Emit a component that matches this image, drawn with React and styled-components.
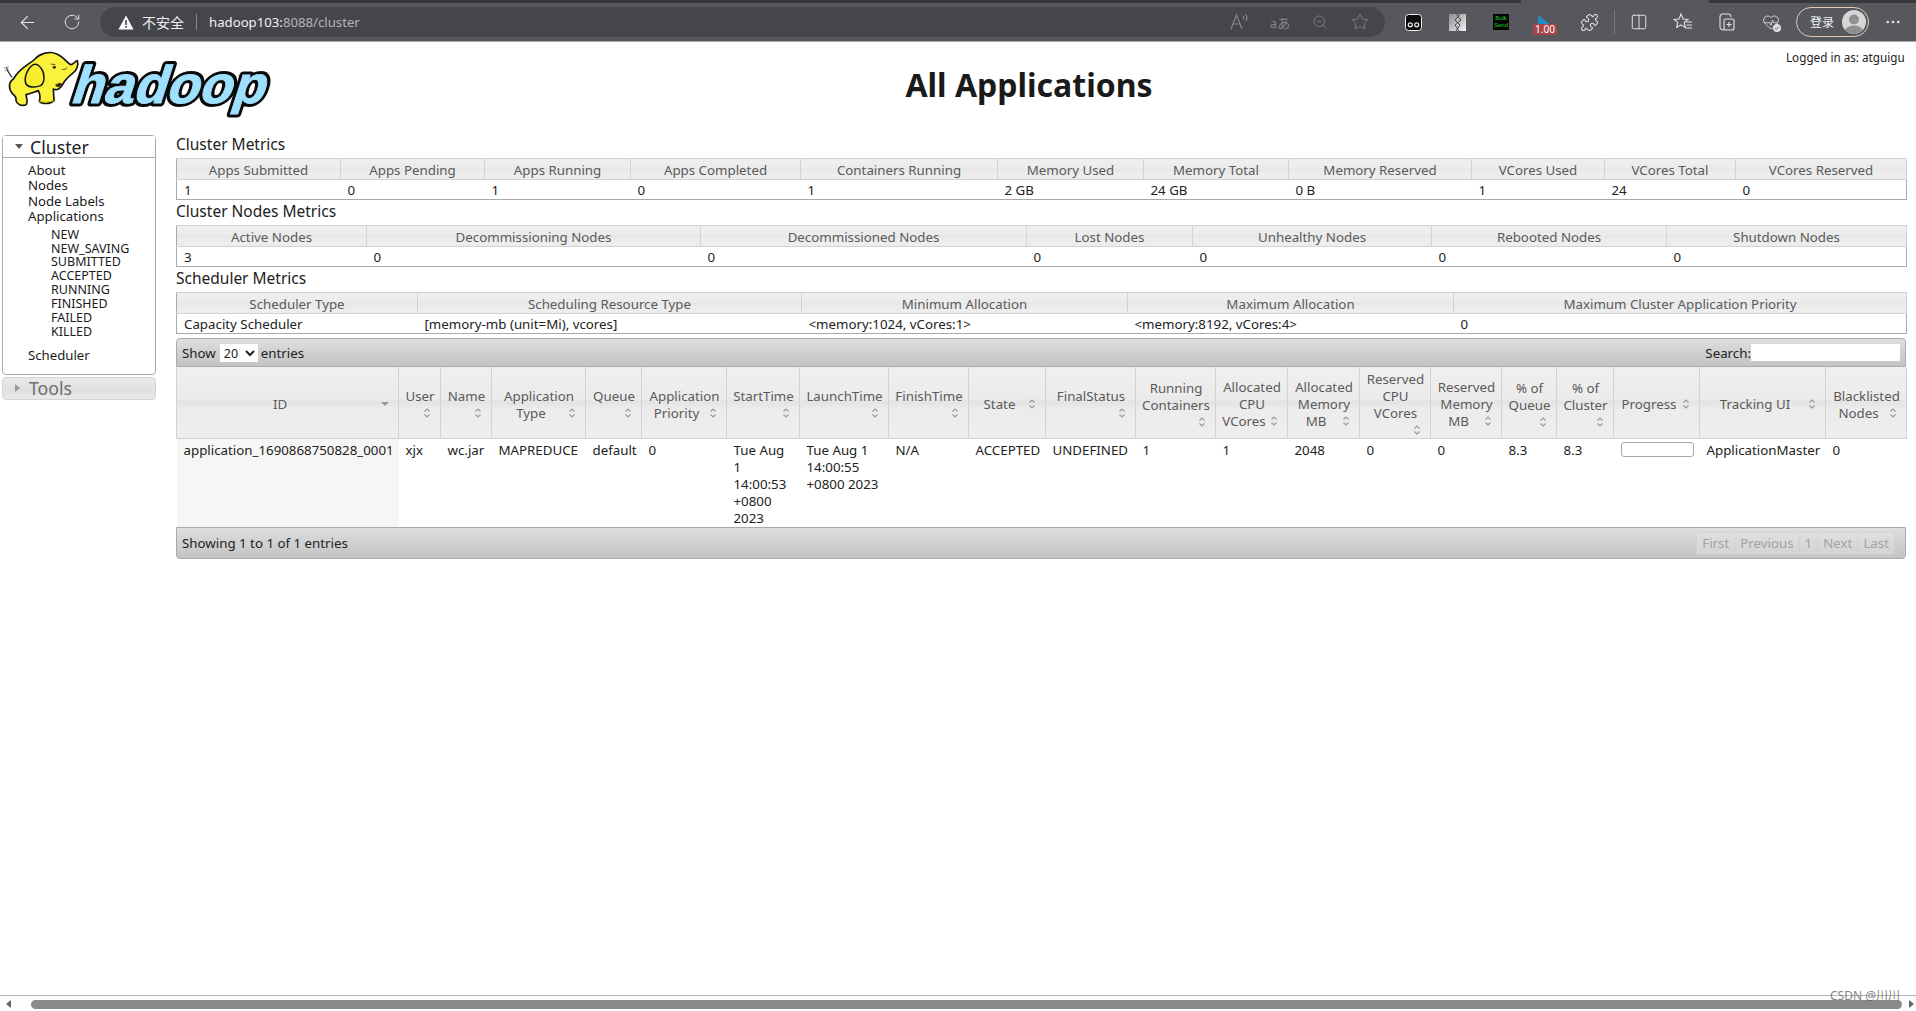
import React from "react";
import styled, { createGlobalStyle } from "styled-components";
import { ArrowLeft, RotateCw, ZoomOut, Star, Puzzle, Columns2, HeartPulse, MoreHorizontal } from "lucide-react";

const FONT = `"Noto Sans", "Noto Sans CJK SC", sans-serif`;

const GlobalStyle = createGlobalStyle`
  html, body {
    margin: 0;
    padding: 0;
    background: #fff;
    overflow: hidden;
  }
  body {
    font-family: ${FONT};
    font-size: 13.3px;
    color: #222;
  }
`;

const Page = styled.div`
  display: flex;
  flex-direction: column;
  width: 1916px;
  height: 1011px;
  overflow: hidden;
`;

/* browser chrome */
const TabStrip = styled.div`
  display: flex;
  height: 3px;
  background: #36373a;
`;

const TabNotch = styled.div`
  width: 188px;
  margin-left: 1521px;
  background: #57585d;
`;

const BrowserBar = styled.div`
  display: flex;
  align-items: center;
  height: 38px;
  padding-left: 5px;
  background: #57585d;
  border-bottom: 1px solid #a9a9a9;
  box-sizing: content-box;
  color: #e6e6e6;
`;

const NavButton = styled.div`
  display: flex;
  align-items: center;
  justify-content: center;
  flex: none;
  width: ${(p) => p.$w || 44}px;
  height: 30px;
  color: ${(p) => p.$color || "#e4e4e4"};
  position: relative;
`;

const AddressPill = styled.div`
  display: flex;
  align-items: center;
  flex: none;
  width: 1285px;
  height: 30px;
  margin: 0 6px;
  padding: 0 5px 0 18px;
  box-sizing: border-box;
  background: #45464b;
  border-radius: 15px;
`;

const Insecure = styled.span`
  margin-left: 8px;
  font-size: 14px;
  color: #f0f0f0;
`;

const PillDivider = styled.span`
  width: 1px;
  height: 16px;
  margin: 0 12px;
  background: #8a8a8a;
`;

const Url = styled.span`
  font-size: 13.2px;
  color: #b4b4b4;
  b {
    font-weight: 400;
    color: #f2f2f2;
  }
`;

const PillTools = styled.div`
  display: flex;
  margin-left: auto;
`;

const PillTool = styled.div`
  display: flex;
  align-items: center;
  justify-content: center;
  width: 40px;
  color: #85868a;
  font-size: 13px;
`;

const BarDivider = styled.span`
  flex: none;
  width: 1px;
  height: 24px;
  margin: 0 2px 0 3px;
  background: #77787c;
`;

const ProfilePill = styled.div`
  display: flex;
  align-items: center;
  justify-content: space-between;
  flex: none;
  width: 73px;
  height: 30px;
  margin-left: 3px;
  padding: 0 2px 0 13px;
  box-sizing: border-box;
  border: 1px solid #e2c9b8;
  border-radius: 15px;
  font-size: 12px;
  color: #f2f2f2;
`;

const BulkSend = styled.div`
  width: 16px;
  height: 16px;
  padding-top: 1px;
  box-sizing: border-box;
  background: #050505;
  color: #1fd01f;
  font-size: 6px;
  line-height: 7px;
  text-align: center;
  font-family: "Liberation Sans", sans-serif;
`;

const RateBadge = styled.div`
  position: absolute;
  left: 10px;
  top: 17px;
  width: 24px;
  height: 11px;
  border-radius: 2px;
  background: #a8434a;
  color: #fff;
  font-size: 10px;
  line-height: 11px;
  text-align: center;
`;

/* page header */
const Header = styled.div`
  display: flex;
  height: 90px;
`;

const LogoBox = styled.div`
  flex: none;
  width: 290px;
  height: 75px;
  margin-top: 4px;
`;

const Title = styled.h1`
  flex: 1;
  margin: 25px 0 0;
  padding-right: 18px;
  font-size: 32px;
  line-height: 36px;
  font-weight: 700;
  text-align: center;
  color: #1a1a1a;
`;

const LoggedIn = styled.div`
  flex: none;
  width: 130px;
  padding-top: 8px;
  font-size: 11.7px;
  line-height: 15px;
  color: #222;
`;

/* body */
const Content = styled.div`
  display: flex;
  flex: 1;
  padding: 0 10px 0 2px;
`;

const Sidebar = styled.nav`
  flex: none;
  width: 154px;
  margin: 3px 20px 0 0;
`;

const Panel = styled.div`
  border: 1px solid #aaa;
  border-radius: 4px;
  background: #fff;
`;

const PanelHead = styled.div`
  display: flex;
  align-items: center;
  height: ${(p) => (p.$closed ? 23 : 22)}px;
  margin-top: ${(p) => (p.$closed ? 2 : 0)}px;
  padding: ${(p) => (p.$closed ? "0 0 2px 12px" : "0 0 0 12px")};
  box-sizing: border-box;
  font-size: 17.7px;
  color: ${(p) => (p.$closed ? "#6e6e6e" : "#222")};
  background: ${(p) => (p.$closed ? "linear-gradient(#eaeaea, #e0e0e0 55%, #e9e9e9)" : "#fff")};
  border: ${(p) => (p.$closed ? "1px solid #d3d3d3" : "0")};
  border-bottom: ${(p) => (p.$closed ? "1px solid #d3d3d3" : "1px solid #aaa")};
  border-radius: ${(p) => (p.$closed ? "4px" : "0")};
`;

const Caret = styled.span`
  flex: none;
  width: 0;
  height: 0;
  margin-right: ${(p) => (p.$closed ? 9 : 7)}px;
  border-style: solid;
  ${(p) =>
    p.$closed
      ? "border-width: 4px 0 4px 5px; border-color: transparent transparent transparent #999;"
      : "border-width: 5px 4px 0 4px; border-color: #555 transparent transparent transparent;"}
`;

const NavList = styled.ul`
  list-style: none;
  margin: 0;
  padding: 4px 0 11px 25px;
`;

const NavItem = styled.li`
  font-size: 13.2px;
  line-height: 15.4px;
  color: #1b1b1b;
  &:first-child {
    margin-top: 1px;
  }
  &:last-child {
    margin-top: 9px;
  }
`;

const SubList = styled.ul`
  list-style: none;
  margin: 3px 0 0;
  padding: 0 0 0 23px;
`;

const SubItem = styled.li`
  font-size: 12.5px;
  line-height: 13.9px;
  color: #1b1b1b;
`;

const Main = styled.main`
  flex: 1;
  min-width: 0;
`;

const Heading = styled.h3`
  height: ${(p) => (p.$first ? 26 : 25)}px;
  margin: 0;
  font-size: 15.5px;
  line-height: ${(p) => (p.$first ? 24 : 22)}px;
  font-weight: 400;
  color: #222;
`;

const InfoTable = styled.table`
  width: 1730px;
  table-layout: fixed;
  border-collapse: collapse;
  border-left: 1px solid #aaa;
  border-right: 1px solid #aaa;
  border-bottom: 1px solid #aaa;
`;

const Col = styled.col`
  width: ${(p) => p.$w}px;
`;

const band = "linear-gradient(#efefef 0, #ebebeb 44%, #e4e4e4 50%, #ececec 60%, #ededed 100%)";

const InfoTh = styled.th`
  box-sizing: border-box;
  height: 21px;
  padding: 3px 4px 0;
  font-size: 13.3px;
  font-weight: 400;
  line-height: 17px;
  color: #5a5a5a;
  background: ${band};
  border: 1px solid #d3d3d3;
  border-left: 0;
`;

const InfoTd = styled.td`
  box-sizing: border-box;
  height: 20px;
  padding: 2px 7px 0;
  font-size: 13.3px;
  line-height: 17px;
  color: #222;
`;

const Toolbar = styled.div`
  display: flex;
  align-items: center;
  justify-content: space-between;
  width: 1730px;
  height: ${(p) => (p.$bottom ? 32 : 29)}px;
  margin-top: ${(p) => (p.$top ? 4 : 0)}px;
  padding: 0 5px;
  box-sizing: border-box;
  background: linear-gradient(#dfdfdf, #d0d0d0 50%, #c4c4c4);
  border: 1px solid #aaa;
  border-radius: ${(p) => (p.$bottom ? "0 0 4px 4px" : "4px 4px 0 0")};
  font-size: 13.3px;
  color: #222;
`;

const LengthSelect = styled.select`
  width: 38px;
  height: 18px;
  margin: 0 3px 0 4px;
  padding: 0;
  border: 0;
  border-radius: 0;
  background-color: #fff;
  font-family: ${FONT};
  font-size: 12.5px;
  color: #222;
`;

const ToolLabel = styled.label`
  display: flex;
  align-items: center;
`;

const SearchInput = styled.input`
  width: 149px;
  height: 17px;
  padding: 0;
  border: 0;
  background: #fff;
`;

const AppTable = styled.table`
  width: 1730px;
  table-layout: fixed;
  border-collapse: collapse;
`;

const AppTh = styled.th`
  box-sizing: border-box;
  height: 70px;
  padding: 4px 5px 0 6px;
  font-size: 13.3px;
  font-weight: 400;
  line-height: 17px;
  color: #5a5a5a;
  background: ${band};
  border-right: 1px solid #d3d3d3;
  border-bottom: 1px solid #d3d3d3;
  text-align: center;
  vertical-align: middle;
  &:first-child {
    border-left: 1px solid #d3d3d3;
  }
`;

const SortSpot = styled.span`
  float: right;
  display: block;
  width: 16px;
  height: 16px;
`;

const AppTd = styled.td`
  box-sizing: border-box;
  height: 88px;
  padding: 3px 6px 0 7px;
  font-size: 13.3px;
  line-height: 17px;
  color: #222;
  vertical-align: top;
  background: ${(p) => (p.$sorted ? "#f6f6f6" : "#fff")};
`;

const ProgressBar = styled.div`
  width: 73px;
  height: 15px;
  margin-top: 0;
  box-sizing: border-box;
  border: 1px solid #aaa;
  border-radius: 3px;
  background: #fff;
`;

const Pager = styled.div`
  display: flex;
  margin-right: 5px;
`;

const PageBtn = styled.span`
  height: 21px;
  padding: 0 5px;
  font-size: 13.3px;
  line-height: 21px;
  color: #a3a3a3;
  background: rgba(235, 235, 235, 0.35);
  border: 1px solid rgba(200, 200, 200, 0.5);
  border-left: 0;
  &:first-child {
    border-left: 1px solid rgba(200, 200, 200, 0.5);
  }
`;

/* scrollbar at the foot of the window */
const ScrollTrack = styled.div`
  position: relative;
  display: flex;
  align-items: center;
  flex: none;
  height: 16px;
  box-sizing: border-box;
  border-top: 1px solid #b4b4b4;
  background: #fdfdfd;
`;

const ScrollThumb = styled.div`
  width: 1871px;
  height: 9px;
  margin: 1px 0 0 20px;
  border-radius: 5px;
  background: #8a8a8a;
`;

const ScrollArrow = styled.span`
  width: 0;
  height: 0;
  margin-left: ${(p) => (p.$right ? 7 : 6)}px;
  border-style: solid;
  border-width: 4px ${(p) => (p.$right ? 0 : "5px")} 4px ${(p) => (p.$right ? "5px" : 0)};
  border-color: transparent ${(p) => (p.$right ? "transparent" : "#666")} transparent ${(p) => (p.$right ? "#666" : "transparent")};
`;

const Watermark = styled.div`
  position: absolute;
  right: 16px;
  top: -8px;
  font-size: 12px;
  line-height: 16px;
  color: rgba(90, 90, 90, 0.75);
`;

const SortIcon = ({ desc }) => (
  <SortSpot>
    <svg width="16" height="16" viewBox="0 0 16 16">
      {desc ? (
        <path d="M4 6h8l-4 4z" fill="#999" />
      ) : (
        <path d="M5.5 6.5 8 4l2.5 2.5M5.5 9.5 8 12l2.5-2.5" fill="none" stroke="#9a9a9a" strokeWidth="1.2" />
      )}
    </svg>
  </SortSpot>
);

const wordmark = {
  x: 0,
  y: 0,
  textLength: 194,
  lengthAdjust: "spacingAndGlyphs",
  fontFamily: "Liberation Sans, sans-serif",
  fontWeight: 700,
  fontSize: 53,
  strokeLinejoin: "round",
};

const HadoopLogo = () => (
  <svg width="290" height="75" viewBox="0 46 290 75">
    <g transform="translate(69 103) skewX(-18)">
      <text {...wordmark} fill="#0a0a0a" stroke="#0a0a0a" strokeWidth="7">
        hadoop
      </text>
      <text {...wordmark} fill="#9fe0ff" stroke="#9fe0ff" strokeWidth="0.8">
        hadoop
      </text>
    </g>
    <g transform="translate(0 44) scale(.3333)" strokeLinejoin="round">
      <path d="M36 100C30 92 24 86 20 72" fill="none" stroke="#333" strokeWidth="4" />
      <path d="M12 72l14-4M14 80l12-6" stroke="#888" strokeWidth="3" />
      <path
        d="M40 105C60 70 90 60 105 45C120 28 150 20 170 30C190 38 200 55 212 62C222 62 226 50 232 50C236 62 232 78 218 88C205 98 195 108 190 118C182 135 170 140 160 135L162 170C150 182 125 180 118 172C122 160 120 150 115 140C100 145 90 150 78 152C80 165 85 175 78 182C65 188 50 180 48 170C50 160 45 155 38 150C25 135 25 115 40 105Z"
        fill="#fbf33b"
        stroke="#141414"
        strokeWidth="5"
      />
      <path
        d="M100 62C85 70 70 100 78 120C85 130 105 132 122 125C135 115 135 90 125 75C118 65 108 58 100 62Z"
        fill="#f9ee2e"
        stroke="#141414"
        strokeWidth="4.5"
      />
      <ellipse cx="163" cy="70" rx="5" ry="4" fill="#222" />
      <path d="M152 60l14 2M186 76c6 2 12 0 16-6" fill="none" stroke="#333" strokeWidth="2.5" />
      <path d="M165 122c6 10 14 10 22-2l-8-4z" fill="#3a2a10" />
      <path d="M118 172c12 4 30 2 44-2" fill="none" stroke="#c9b800" strokeWidth="3" />
    </g>
  </svg>
);

const Warning = () => (
  <svg width="16" height="15" viewBox="0 0 16 15">
    <path d="M8 .5 15.6 14.5H.4z" fill="#fbfbfb" />
    <path d="M7.2 5h1.6v5H7.2zM7.2 11h1.6v1.7H7.2z" fill="#45464b" />
  </svg>
);

const ReadAloud = () => (
  <svg width="20" height="18" viewBox="0 0 20 18" fill="none" stroke="#85868a" strokeWidth="1.2">
    <path d="M1 16 6.5 2 12 16M3 11h7" />
    <path d="M13 3c1 .8 1 2.6 0 3.4M15.5 1.5c2 1.6 2 5 0 6.6" />
  </svg>
);

const GhostBox = () => (
  <svg width="17" height="17" viewBox="0 0 17 17">
    <rect x=".5" y=".5" width="16" height="16" rx="3" fill="#0c0c0c" stroke="#eee" />
    <circle cx="5.3" cy="10.8" r="2.6" fill="#eee" />
    <circle cx="11.7" cy="10.8" r="2.6" fill="#eee" />
    <circle cx="5.3" cy="10.8" r="1.4" fill="#0c0c0c" />
    <circle cx="11.7" cy="10.8" r="1.4" fill="#0c0c0c" />
  </svg>
);

const Helix = () => (
  <svg width="17" height="17" viewBox="0 0 17 17">
    <defs>
      <linearGradient id="hx" x1="0" x2="1" y1="0" y2="1">
        <stop offset="0" stopColor="#8c8c8c" />
        <stop offset="1" stopColor="#f4f4f4" />
      </linearGradient>
    </defs>
    <rect width="17" height="17" fill="url(#hx)" />
    <path d="M11 0 6 6l5 5-4 6M7 0l5 6-6 5 4 6" fill="none" stroke="#444" strokeWidth="1" />
  </svg>
);

const BlueFlag = () => (
  <svg width="16" height="14" viewBox="0 0 16 14">
    <path d="M1 0 15 11H1z" fill="#1d8fc4" />
  </svg>
);

const FavList = () => (
  <svg width="20" height="20" viewBox="0 0 20 20" fill="none" stroke="#e4e4e4" strokeWidth="1.1">
    <path d="M8 2 10 7l5 .4-3.8 3 1.1 5L8 12.8 3.7 15.4l1.1-5L1 7.4 6 7z" />
    <path d="M13 10h6M13.5 13h5.5M12.5 16h6.5" />
  </svg>
);

const Collections = () => (
  <svg width="20" height="20" viewBox="0 0 20 20" fill="none" stroke="#e4e4e4" strokeWidth="1.1">
    <path d="M7 18C4 18 3 16.5 3 15V5c0-2 1-3 3-3h5c1.5 0 3 1 3 3" />
    <rect x="7" y="7" width="10" height="11" rx="2" />
    <path d="M12 10v5M9.5 12.5h5" />
  </svg>
);

const HealthCheck = () => (
  <NavButton>
    <HeartPulse size={18} strokeWidth={1.1} />
    <svg width="8" height="8" viewBox="0 0 9 9" style={{ marginLeft: -7, marginTop: 11 }}>
      <circle cx="4.5" cy="4.5" r="4.5" fill="#dedede" />
      <path d="M2.5 4.5 4 6l2.5-3" fill="none" stroke="#555" />
    </svg>
  </NavButton>
);

const Avatar = () => (
  <svg width="24" height="24" viewBox="0 0 24 24">
    <clipPath id="av">
      <circle cx="12" cy="12" r="12" />
    </clipPath>
    <g clipPath="url(#av)">
      <rect width="24" height="24" fill="#d6d6d6" />
      <circle cx="12" cy="9.5" r="5" fill="#8f8f8f" />
      <ellipse cx="12" cy="23" rx="10" ry="7.5" fill="#8f8f8f" />
    </g>
  </svg>
);

const metrics = {
  cluster: {
    widths: [164, 144, 146, 170, 197, 146, 145, 183, 133, 131, 171],
    head: ["Apps Submitted", "Apps Pending", "Apps Running", "Apps Completed", "Containers Running", "Memory Used", "Memory Total", "Memory Reserved", "VCores Used", "VCores Total", "VCores Reserved"],
    row: ["1", "0", "1", "0", "1", "2 GB", "24 GB", "0 B", "1", "24", "0"],
  },
  nodes: {
    widths: [190, 334, 326, 166, 239, 235, 240],
    head: ["Active Nodes", "Decommissioning Nodes", "Decommissioned Nodes", "Lost Nodes", "Unhealthy Nodes", "Rebooted Nodes", "Shutdown Nodes"],
    row: ["3", "0", "0", "0", "0", "0", "0"],
  },
  scheduler: {
    widths: [241, 384, 326, 326, 453],
    head: ["Scheduler Type", "Scheduling Resource Type", "Minimum Allocation", "Maximum Allocation", "Maximum Cluster Application Priority"],
    row: ["Capacity Scheduler", "[memory-mb (unit=Mi), vcores]", "<memory:1024, vCores:1>", "<memory:8192, vCores:4>", "0"],
  },
};

const MetricTable = ({ data }) => (
  <InfoTable>
    <colgroup>
      {data.widths.map((w, i) => (
        <Col key={i} $w={w} />
      ))}
    </colgroup>
    <thead>
      <tr>
        {data.head.map((h) => (
          <InfoTh key={h}>{h}</InfoTh>
        ))}
      </tr>
    </thead>
    <tbody>
      <tr>
        {data.row.map((v, i) => (
          <InfoTd key={i}>{v}</InfoTd>
        ))}
      </tr>
    </tbody>
  </InfoTable>
);

const appColumns = [
  ["ID", 222, "application_1690868750828_0001"],
  ["User", 42, "xjx"],
  ["Name", 51, "wc.jar"],
  ["Application Type", 94, "MAPREDUCE"],
  ["Queue", 56, "default"],
  ["Application Priority", 85, "0"],
  ["StartTime", 73, "Tue Aug 1 14:00:53 +0800 2023"],
  ["LaunchTime", 89, "Tue Aug 1 14:00:55 +0800 2023"],
  ["FinishTime", 80, "N/A"],
  ["State", 77, "ACCEPTED"],
  ["FinalStatus", 90, "UNDEFINED"],
  ["Running Containers", 80, "1"],
  ["Allocated CPU VCores", 72, "1"],
  ["Allocated Memory MB", 72, "2048"],
  ["Reserved CPU VCores", 71, "0"],
  ["Reserved Memory MB", 71, "0"],
  ["% of Queue", 55, "8.3"],
  ["% of Cluster", 57, "8.3"],
  ["Progress", 86, null],
  ["Tracking UI", 126, "ApplicationMaster"],
  ["Blacklisted Nodes", 81, "0"],
];

const clusterLinks = ["NEW", "NEW_SAVING", "SUBMITTED", "ACCEPTED", "RUNNING", "FINISHED", "FAILED", "KILLED"];

export default function App() {
  return (
    <Page>
      <GlobalStyle />
      <TabStrip>
        <TabNotch />
      </TabStrip>
      <BrowserBar>
        <NavButton $w={45}>
          <ArrowLeft size={21} strokeWidth={1.3} />
        </NavButton>
        <NavButton>
          <RotateCw size={18} strokeWidth={1.3} />
        </NavButton>
        <AddressPill>
          <Warning />
          <Insecure>不安全</Insecure>
          <PillDivider />
          <Url>
            <b>hadoop103:</b>8088/cluster
          </Url>
          <PillTools>
            <PillTool>
              <ReadAloud />
            </PillTool>
            <PillTool>aあ</PillTool>
            <PillTool>
              <ZoomOut size={16} strokeWidth={1.2} />
            </PillTool>
            <PillTool>
              <Star size={18} strokeWidth={1.2} />
            </PillTool>
          </PillTools>
        </AddressPill>
        <NavButton>
          <GhostBox />
        </NavButton>
        <NavButton>
          <Helix />
        </NavButton>
        <NavButton>
          <BulkSend>
            Bulk
            <br />
            Send
          </BulkSend>
        </NavButton>
        <NavButton>
          <BlueFlag />
          <RateBadge>1.00</RateBadge>
        </NavButton>
        <NavButton>
          <Puzzle size={19} strokeWidth={1.3} />
        </NavButton>
        <BarDivider />
        <NavButton>
          <Columns2 size={18} strokeWidth={1.3} />
        </NavButton>
        <NavButton>
          <FavList />
        </NavButton>
        <NavButton>
          <Collections />
        </NavButton>
        <HealthCheck />
        <ProfilePill>
          登录
          <Avatar />
        </ProfilePill>
        <NavButton $w={47}>
          <MoreHorizontal size={18} strokeWidth={1.6} />
        </NavButton>
      </BrowserBar>

      <Header>
        <LogoBox>
          <HadoopLogo />
        </LogoBox>
        <Title>All Applications</Title>
        <LoggedIn>Logged in as: atguigu</LoggedIn>
      </Header>

      <Content>
        <Sidebar>
          <Panel>
            <PanelHead>
              <Caret />
              Cluster
            </PanelHead>
            <NavList>
              <NavItem>About</NavItem>
              <NavItem>Nodes</NavItem>
              <NavItem>Node Labels</NavItem>
              <NavItem>
                Applications
                <SubList>
                  {clusterLinks.map((l) => (
                    <SubItem key={l}>{l}</SubItem>
                  ))}
                </SubList>
              </NavItem>
              <NavItem>Scheduler</NavItem>
            </NavList>
          </Panel>
          <PanelHead $closed>
            <Caret $closed />
            Tools
          </PanelHead>
        </Sidebar>

        <Main>
          <Heading $first>Cluster Metrics</Heading>
          <MetricTable data={metrics.cluster} />
          <Heading>Cluster Nodes Metrics</Heading>
          <MetricTable data={metrics.nodes} />
          <Heading>Scheduler Metrics</Heading>
          <MetricTable data={metrics.scheduler} />

          <Toolbar $top>
            <ToolLabel>
              Show
              <LengthSelect defaultValue="20">
                <option>20</option>
                <option>40</option>
                <option>60</option>
              </LengthSelect>
              entries
            </ToolLabel>
            <ToolLabel>
              Search:
              <SearchInput type="text" />
            </ToolLabel>
          </Toolbar>
          <AppTable>
            <colgroup>
              {appColumns.map(([name, w]) => (
                <Col key={name} $w={w} />
              ))}
            </colgroup>
            <thead>
              <tr>
                {appColumns.map(([name], i) => (
                  <AppTh key={name}>
                    {name}
                    <SortIcon desc={i === 0} />
                  </AppTh>
                ))}
              </tr>
            </thead>
            <tbody>
              <tr>
                {appColumns.map(([name, , value], i) => (
                  <AppTd key={name} $sorted={i === 0}>
                    {value === null ? <ProgressBar /> : value}
                  </AppTd>
                ))}
              </tr>
            </tbody>
          </AppTable>
          <Toolbar $bottom>
            <span>Showing 1 to 1 of 1 entries</span>
            <Pager>
              <PageBtn>First</PageBtn>
              <PageBtn>Previous</PageBtn>
              <PageBtn>1</PageBtn>
              <PageBtn>Next</PageBtn>
              <PageBtn>Last</PageBtn>
            </Pager>
          </Toolbar>
        </Main>
      </Content>

      <ScrollTrack>
        <ScrollArrow />
        <ScrollThumb />
        <ScrollArrow $right />
        <Watermark>CSDN @川川</Watermark>
      </ScrollTrack>
    </Page>
  );
}
